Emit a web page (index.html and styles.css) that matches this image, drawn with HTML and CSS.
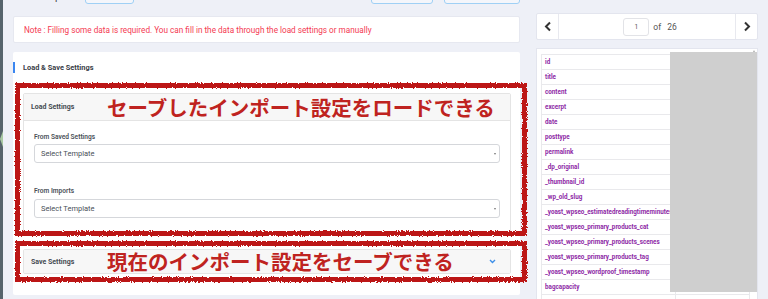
FILE: index.html
```html
<!DOCTYPE html>
<html lang="ja">
<head>
<meta charset="utf-8">
<title>Load &amp; Save Settings</title>
<link rel="stylesheet" href="styles.css">
</head>
<body>
<svg class="defs" width="0" height="0" aria-hidden="true">
  <filter id="rough" x="-3%" y="-10%" width="106%" height="120%">
    <feTurbulence type="fractalNoise" baseFrequency="0.8" numOctaves="2" seed="4" result="noise"/>
    <feDisplacementMap in="SourceGraphic" in2="noise" scale="3.5" xChannelSelector="R" yChannelSelector="G"/>
  </filter>
</svg>
<div class="app">
  <div class="rail"><span class="rail-tab"></span></div>
  <div class="main">
    <div class="topbar">
      <span class="top-text">p</span>
      <span class="tb-btn b1"></span>
      <span class="tb-spacer"></span>
      <span class="tb-btn b2"></span>
      <span class="tb-btn b3"></span>
    </div>
    <div class="columns">
      <div class="left">
        <div class="note">Note : Filling some data is required. You can fill in the data through the load settings or manually</div>
        <div class="card">
          <div class="card-title">Load &amp; Save Settings</div>
          <div class="panel load">
            <div class="panel-head">
              <span class="panel-label">Load Settings</span>
              <span class="anno-text">セーブしたインポート設定をロードできる</span>
            </div>
            <div class="panel-body">
              <div class="field-label">From Saved Settings</div>
              <div class="select"><span>Select Template</span><span class="caret"></span></div>
              <div class="field-label second">From Imports</div>
              <div class="select"><span>Select Template</span><span class="caret"></span></div>
            </div>
          </div>
          <div class="panel save">
            <div class="panel-head">
              <span class="panel-label">Save Settings</span>
              <span class="anno-text">現在のインポート設定をセーブできる</span>
              <svg class="chev" width="7" height="5" viewBox="0 0 7 5"><polyline points="1,1 3.5,3.5 6,1" fill="none" stroke="#3d8fe8" stroke-width="1.4"/></svg>
            </div>
          </div>
          <div class="anno-box box1"></div>
          <div class="anno-box box2"></div>
        </div>
      </div>
      <div class="right">
        <div class="pager">
          <span class="pg-btn prev"><svg width="8" height="11" viewBox="0 0 8 11"><polyline points="6,1.5 2,5.5 6,9.5" fill="none" stroke="#333" stroke-width="2"/></svg></span>
          <span class="pg-center"><span class="pg-input">1</span><span class="pg-of">of</span><span class="pg-total">26</span></span>
          <span class="pg-btn next"><svg width="8" height="11" viewBox="0 0 8 11"><polyline points="2,1.5 6,5.5 2,9.5" fill="none" stroke="#333" stroke-width="2"/></svg></span>
        </div>
        <div class="fields">
          <table class="field-table">
            <tr><td>id</td><td></td></tr>
            <tr><td>title</td><td></td></tr>
            <tr><td>content</td><td></td></tr>
            <tr><td>excerpt</td><td></td></tr>
            <tr><td>date</td><td></td></tr>
            <tr><td>posttype</td><td></td></tr>
            <tr><td>permalink</td><td></td></tr>
            <tr><td>_dp_original</td><td></td></tr>
            <tr><td>_thumbnail_id</td><td></td></tr>
            <tr><td>_wp_old_slug</td><td></td></tr>
            <tr><td>_yoast_wpseo_estimatedreadingtimeminutes</td><td></td></tr>
            <tr><td>_yoast_wpseo_primary_products_cat</td><td></td></tr>
            <tr><td>_yoast_wpseo_primary_products_scenes</td><td></td></tr>
            <tr><td>_yoast_wpseo_primary_products_tag</td><td></td></tr>
            <tr><td>_yoast_wpseo_wordproof_timestamp</td><td></td></tr>
            <tr><td>bagcapacity</td><td></td></tr>
            <tr><td>&nbsp;</td><td></td></tr>
          </table>
          <div class="mask"></div>
          <span class="scroll-arrow"></span>
        </div>
      </div>
    </div>
  </div>
</div>
</body>
</html>
```

FILE: styles.css
```css
html, body {
  margin: 0;
  padding: 0;
  width: 768px;
  height: 299px;
  overflow: hidden;
  background: #eef0f7;
  font-family: Roboto, "Noto Sans", "Liberation Sans", sans-serif;
}

.defs {
  position: absolute;
  width: 0;
  height: 0;
}

.app {
  display: flex;
  height: 299px;
  overflow: hidden;
}

.rail {
  position: relative;
  width: 3px;
  flex: none;
  background: #56646c;
}

.rail-tab {
  position: absolute;
  left: 0;
  top: 131px;
  width: 0;
  height: 0;
  border-top: 8px solid transparent;
  border-bottom: 8px solid transparent;
  border-right: 3px solid #a9c9a4;
}

.main {
  flex: 1;
  padding: 0 10px 0 10px;
  display: flex;
  flex-direction: column;
  min-height: 0;
}

/* top toolbar: only bottom edges of buttons are visible */
.topbar {
  flex: none;
  height: 13px;
  display: flex;
  align-items: flex-start;
  position: relative;
}

.top-text {
  position: absolute;
  left: 42px;
  top: -8px;
  font-size: 10px;
  line-height: 10px;
  color: #444;
}

.tb-btn {
  margin-top: -15px;
  height: 19px;
  border: 1px solid #9fd0f5;
  border-radius: 3px;
  background: #f4f6fb;
  box-sizing: border-box;
}

.b1 { margin-left: 72px; width: 49px; }
.tb-spacer { width: 237px; }
.b2 { width: 62px; }
.b3 { margin-left: 11px; width: 76px; }

.columns {
  display: flex;
  gap: 16px;
  flex: none;
  height: 286px;
}

.left {
  width: 507px;
  flex: none;
  display: flex;
  flex-direction: column;
}

.right {
  width: 222px;
  flex: none;
  display: flex;
  flex-direction: column;
}

.note {
  flex: none;
  margin-top: 3px;
  height: 27px;
  box-sizing: border-box;
  background: #fff;
  border: 1px solid #e6e8f0;
  border-radius: 2px;
  padding: 0 10px;
  display: flex;
  align-items: center;
  font-size: 8.2px;
  color: #f43a52;
  white-space: nowrap;
}

.card {
  flex: none;
  position: relative;
  margin-top: 9px;
  background: #fff;
  border-radius: 2px;
  padding: 10px 9px 21px 0;
}

.card-title {
  height: 11px;
  line-height: 11px;
  border-left: 2px solid #3a86f0;
  padding-left: 8px;
  font-size: 7.4px;
  font-weight: 700;
  color: #3a4048;
  margin-bottom: 20px;
}

.panel {
  margin-left: 10px;
  border: 1px solid #e4e4e4;
  border-radius: 2px;
  background: #fff;
}

.panel-head {
  height: 26px;
  box-sizing: border-box;
  background: #f7f7f7;
  display: flex;
  align-items: center;
  padding: 0 14px 0 7px;
}

.load .panel-head {
  border-bottom: 1px solid #e4e4e4;
  height: 27px;
}

.save {
  margin-top: 16px;
}

.save .panel-head {
  height: 23px;
}

.panel-label {
  width: 76px;
  flex: none;
  font-size: 7px;
  font-weight: 700;
  color: #454b52;
}

.anno-text {
  font-family: "Noto Sans CJK JP", "Noto Sans CJK SC", sans-serif;
  font-weight: 700;
  font-size: 20.5px;
  line-height: 1;
  color: #bf2320;
  white-space: nowrap;
  flex: 1;
}

.chev {
  flex: none;
}

.panel-body {
  padding: 12px 10px 14px 10px;
}

.field-label {
  font-size: 6.6px;
  font-weight: 600;
  color: #4a5058;
  line-height: 8px;
  margin-bottom: 3px;
}

.field-label.second {
  margin-top: 24px;
  margin-bottom: 4px;
}

.select {
  height: 19px;
  box-sizing: border-box;
  border: 1px solid #d5d7db;
  border-radius: 3px;
  display: flex;
  align-items: center;
  justify-content: space-between;
  padding: 0 3px 0 6px;
  font-size: 7.5px;
  color: #495057;
}

.caret {
  width: 0;
  height: 0;
  border-left: 1.5px solid transparent;
  border-right: 1.5px solid transparent;
  border-top: 2px solid #777;
}

/* annotation boxes drawn over the card */
.anno-box {
  position: absolute;
  left: 2px;
  width: 512px;
  box-sizing: border-box;
  border: 5px solid #bc1913;
  filter: url(#rough);
  pointer-events: none;
}

.box1 { top: 31px; height: 153px; }
.box2 { top: 189px; height: 41px; }

/* pager */
.pager {
  flex: none;
  height: 27px;
  box-sizing: border-box;
  background: #fff;
  border: 1px solid #e3e5ee;
  border-radius: 2px;
  display: flex;
  align-items: stretch;
}

.pg-btn {
  width: 21px;
  flex: none;
  display: flex;
  align-items: center;
  justify-content: center;
}

.prev { border-right: 1px solid #e8e9ef; }
.next { border-left: 1px solid #e8e9ef; }

.pg-center {
  flex: 1;
  display: flex;
  align-items: center;
  justify-content: center;
  padding-left: 6px;
  font-size: 8.5px;
  color: #555;
}

.pg-input {
  width: 26px;
  height: 18px;
  box-sizing: border-box;
  border: 1px solid #e2e3e7;
  border-radius: 3px;
  display: flex;
  align-items: center;
  justify-content: center;
  font-size: 6.5px;
  color: #555;
  margin-right: 4px;
}

.pg-of { margin-right: 6px; }

/* field list */
.fields {
  position: relative;
  margin-top: 8px;
  flex: 1;
  background: #fff;
  border: 1px solid #e3e5ee;
  border-bottom: none;
  padding: 5px 7px 0 4px;
  overflow: hidden;
}

.field-table {
  width: 100%;
  border-collapse: collapse;
}

.field-table td {
  height: 14px;
  padding: 0 3px;
  border: 1px solid #e9e9ec;
  font-size: 6.3px;
  font-weight: 700;
  color: #8e2aa6;
  white-space: nowrap;
  line-height: 14px;
}

.field-table td:first-child {
  width: 125px;
}

.mask {
  position: absolute;
  left: 133px;
  top: 3px;
  width: 87px;
  height: 240px;
  background: #cfcfcf;
}

.scroll-arrow {
  position: absolute;
  right: 2px;
  top: 1px;
  width: 0;
  height: 0;
  border-left: 1.5px solid transparent;
  border-right: 1.5px solid transparent;
  border-bottom: 2px solid #aaa;
}
```
